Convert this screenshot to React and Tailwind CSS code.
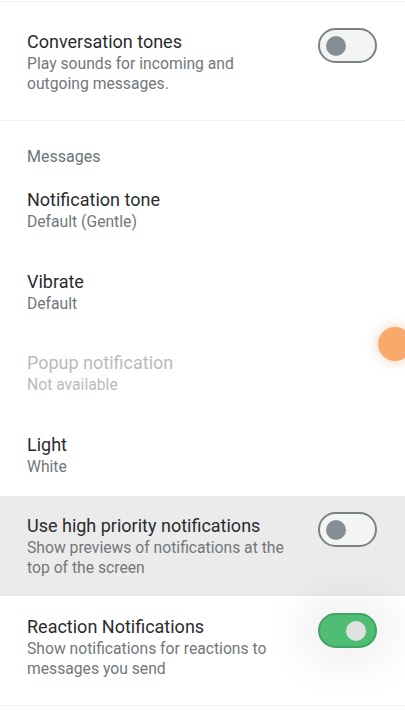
import React from "react";

function Toggle({ on }) {
  if (on) {
    return (
      <div className="mt-[-2px] flex h-[35px] w-[59px] shrink-0 items-center justify-end rounded-full border-[2.5px] border-[#3fa464] bg-[#4fbd74] pr-[9px] shadow-[0_0_40px_22px_rgba(0,0,0,0.05)]">
        <div className="h-[20px] w-[20px] rounded-full bg-[#dfe2e1]" />
      </div>
    );
  }
  return (
    <div className="mt-[-2px] flex h-[35px] w-[59px] shrink-0 items-center rounded-full border-[2.5px] border-[#7c8183] bg-[#f3f5f5] pl-[6px]">
      <div className="h-[20px] w-[20px] rounded-full bg-[#858e93]" />
    </div>
  );
}

function SettingRow({ title, subtitle, toggle, disabled, className = "" }) {
  return (
    <div className={`flex items-start justify-between pl-[27px] pr-[28px] ${className}`}>
      <div className="flex flex-col">
        <div
          className={`text-[18px] leading-[24px] ${
            disabled ? "text-[#b8bbbd]" : "text-[#2a2b2d]"
          }`}
        >
          {title}
        </div>
        <div
          className={`max-w-[264px] text-[15.7px] leading-[20px] ${
            disabled ? "text-[#b8bbbd]" : "text-[#72777a]"
          }`}
        >
          {subtitle}
        </div>
      </div>
      {toggle !== undefined && <Toggle on={toggle} />}
    </div>
  );
}

export default function App() {
  return (
    <div
      className="relative h-[720px] w-[405px] overflow-hidden bg-white"
      style={{ fontFamily: "Roboto, 'Noto Sans', sans-serif" }}
    >
      <div className="h-[2px] border-b border-[#f0f0f0]" />

      <SettingRow
        className="pt-[28px] pb-[26px]"
        title="Conversation tones"
        subtitle="Play sounds for incoming and outgoing messages."
        toggle={false}
      />
      <div className="h-px bg-[#f1f1f1]" />

      <div className="pl-[27px] pt-[26px] pb-[3px] text-[16px] leading-[20px] text-[#6b7377]">
        Messages
      </div>

      <SettingRow className="pt-[18px] pb-[19.5px]" title="Notification tone" subtitle="Default (Gentle)" />
      <SettingRow className="pt-[18px] pb-[19.5px]" title="Vibrate" subtitle="Default" />
      <SettingRow className="pt-[18px] pb-[19.5px]" title="Popup notification" subtitle="Not available" disabled />
      <SettingRow className="pt-[18px] pb-[19.5px]" title="Light" subtitle="White" />

      <SettingRow
        className="bg-[#ebebeb] pt-[18px] pb-[18px]"
        title="Use high priority notifications"
        subtitle="Show previews of notifications at the top of the screen"
        toggle={false}
      />
      <SettingRow
        className="pt-[19px] pb-[26px]"
        title="Reaction Notifications"
        subtitle="Show notifications for reactions to messages you send"
        toggle={true}
      />
      <div className="h-px bg-[#f1f1f1]" />

      <div className="absolute left-[378px] top-[327px] h-[34px] w-[34px] rounded-full bg-[#f7aa6c] shadow-[0_0_8px_3px_rgba(247,170,108,0.35)]" />
    </div>
  );
}
